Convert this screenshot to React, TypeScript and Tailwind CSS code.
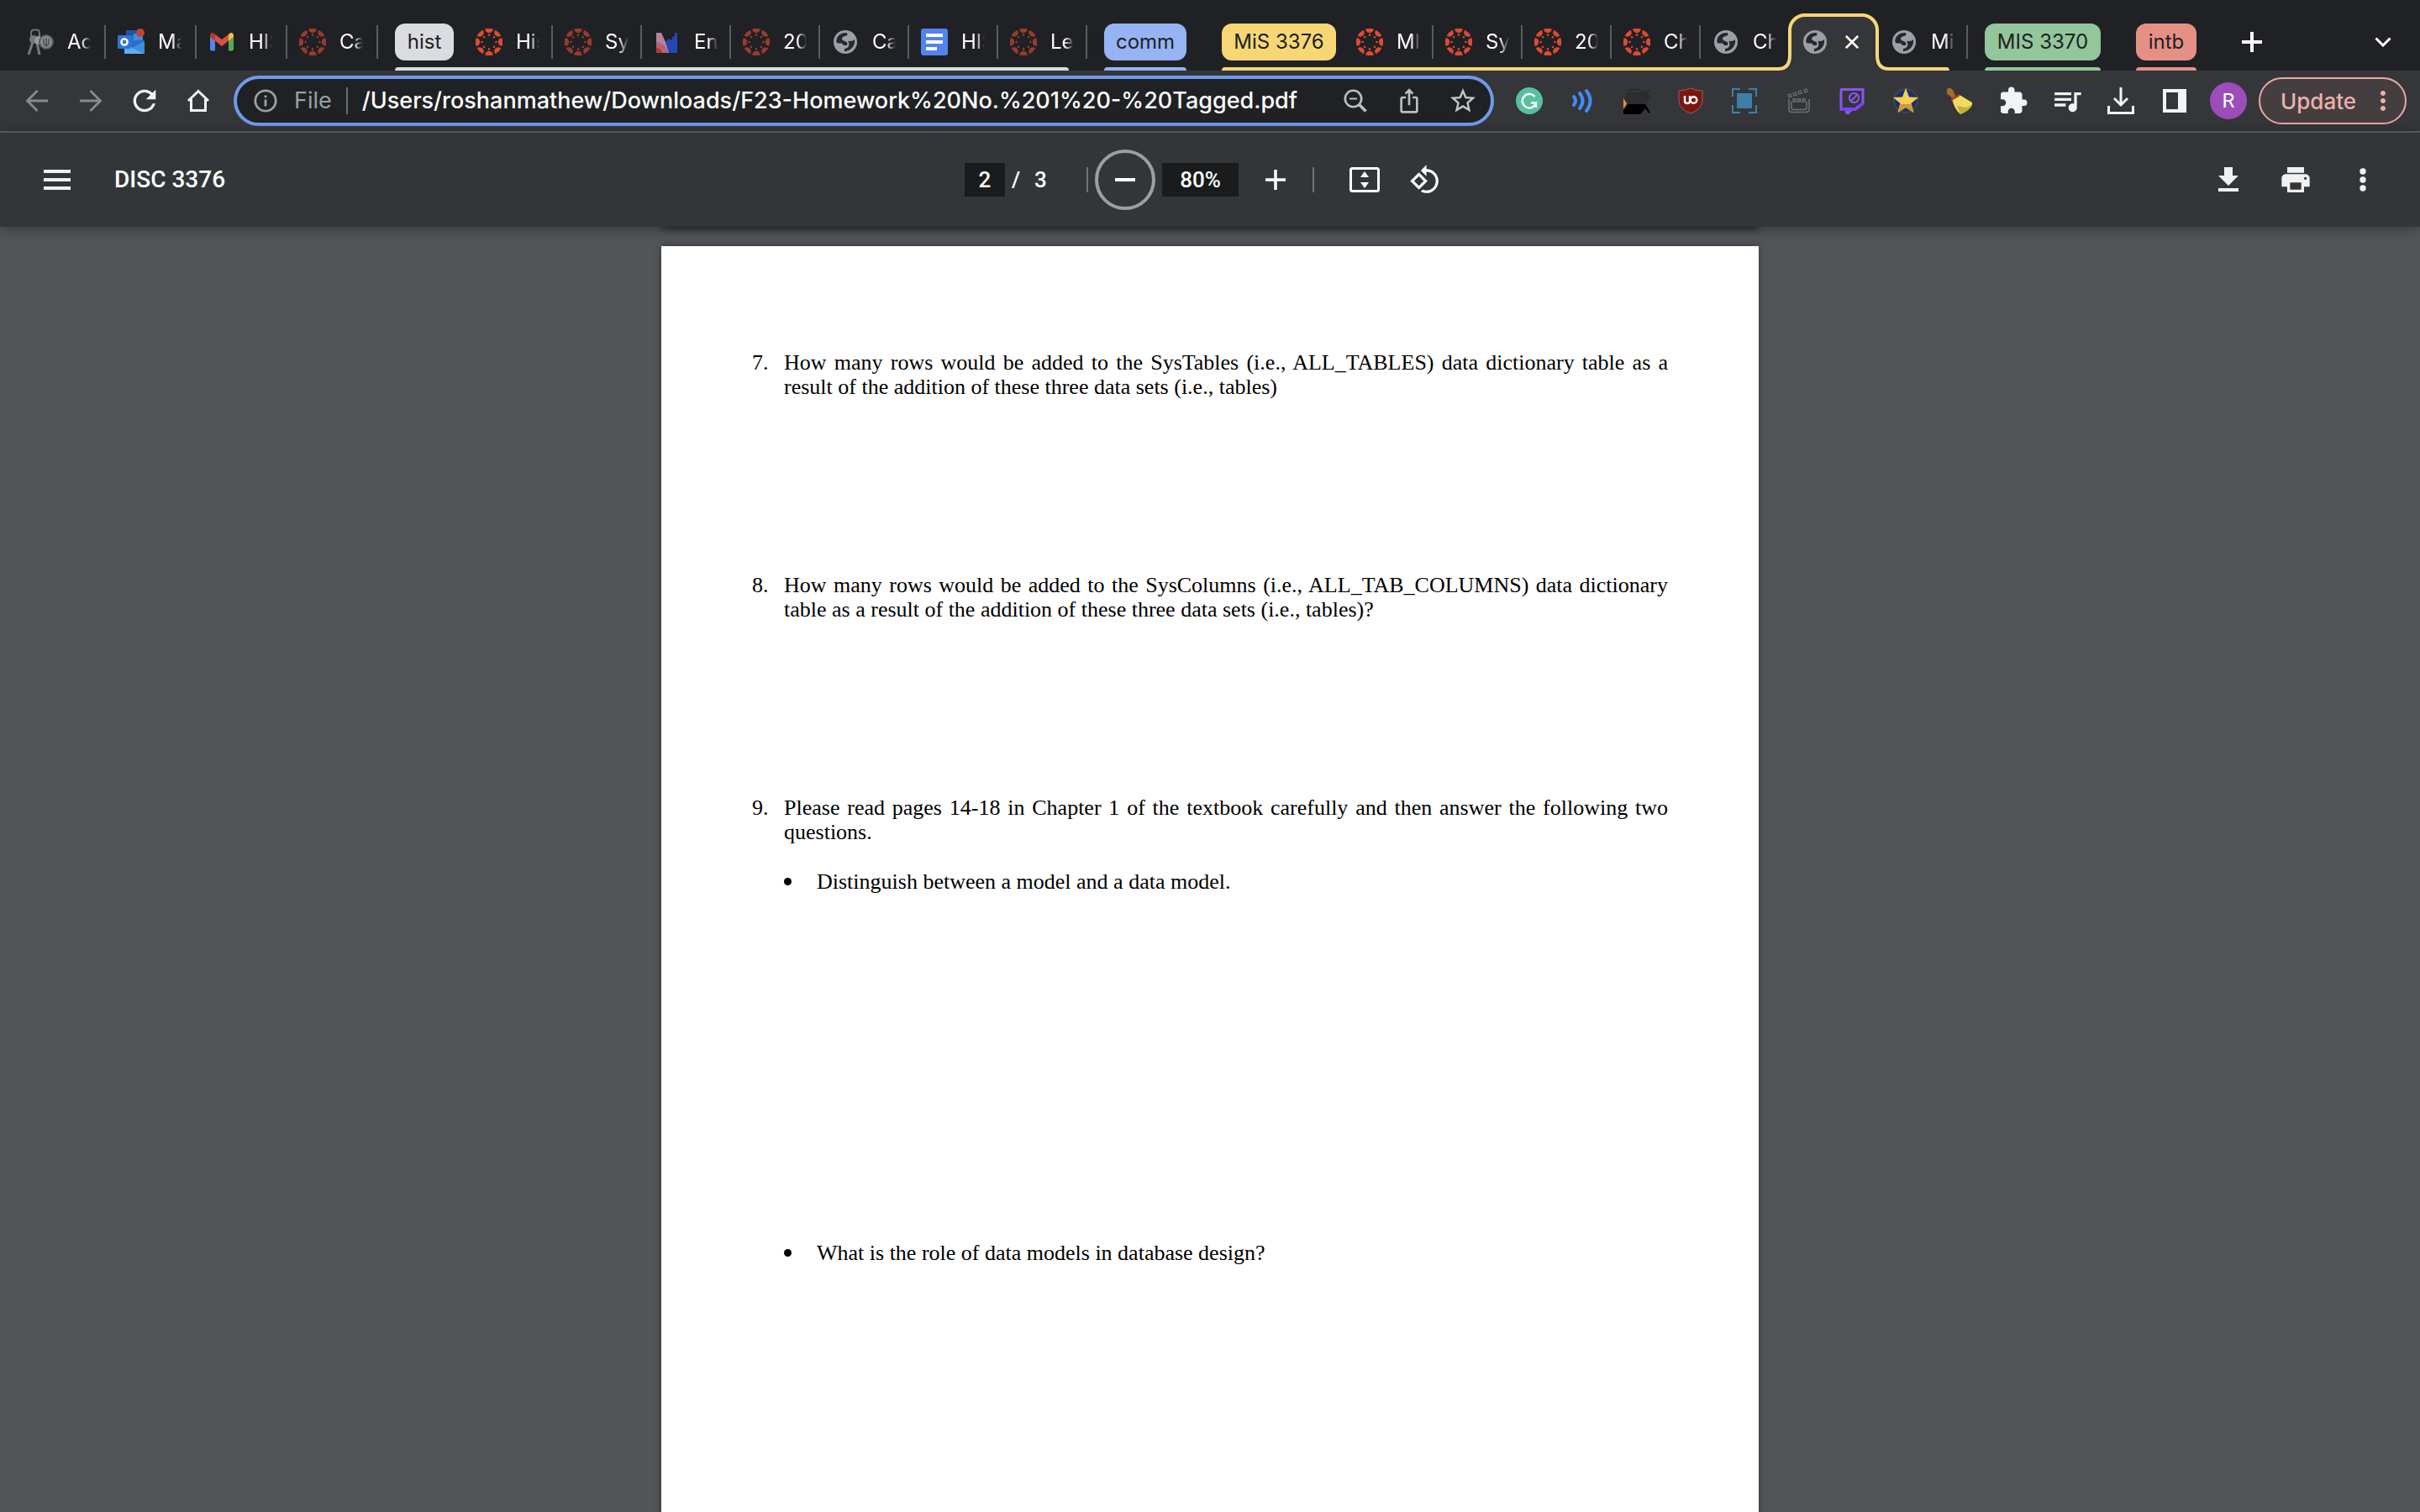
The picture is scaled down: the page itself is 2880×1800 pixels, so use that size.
import type { ReactNode } from "react";
import {
  MdExtension,
  MdIosShare,
  MdMoreVert,
  MdPrint,
  MdQueueMusic,
  MdRefresh,
  MdRotate90DegreesCcw,
  MdStarBorder,
} from "react-icons/md";

const ring = [0, 45, 90, 135, 180, 225, 270, 315];

function CanvasLogo({ dim }: { dim?: boolean }) {
  return (
    <svg viewBox="0 0 32 32" className={dim ? "size-8 shrink-0 text-[#983b2e]" : "size-8 shrink-0 text-[#dd4a35]"} fill="currentColor">
      {ring.map((a) => (
        <g key={a} transform={`rotate(${a} 16 16)`}>
          <path d="M11.2.6A16 16 0 0 1 20.8.6A4.800 4.600 0 0 1 11.2.6Z" />
          <circle cx="16" cy="7.6" r="1.300" />
        </g>
      ))}
    </svg>
  );
}

function Globe() {
  return (
    <svg viewBox="0 0 32 32" className="size-8 shrink-0">
      <circle cx="16" cy="16" r="14" fill="#9aa0a6" />
      <path d="M18 5Q8 4.500 5.500 13Q4.500 17.500 8 17.500H12L14 20H17.500Q19.500 18 17.500 16L13 14Q10.500 11.500 14 9.500L18.500 8Z" fill="#26282b" />
      <path d="M19.500 14.500Q24 16 27 13Q28 21 21 25.500L15 27.500V24Q20 23.500 20.500 19Z" fill="#26282b" />
    </svg>
  );
}

function Keys() {
  return (
    <svg viewBox="0 0 32 32" className="size-8 shrink-0" fill="none">
      <path d="M5 9V5Q5 1.500 9 1.500H12Q15 1.500 15 5V11" stroke="#6f7072" strokeWidth="2" />
      <circle cx="8" cy="13" r="5" fill="#747577" />
      <path d="M7 16L2 31M12 17L15 31" stroke="#77787a" strokeWidth="3" />
      <circle cx="14" cy="14" r="5" fill="#98999b" />
      <circle cx="23" cy="16" r="8" fill="#8c8d8f" stroke="#5a5b5d" strokeWidth="2" />
      <path d="M20 12V17Q20 20 23 20T26 17V12M23 11V22" stroke="#4b4c4e" strokeWidth="1.500" />
    </svg>
  );
}

function Outlook() {
  return (
    <svg viewBox="0 0 32 32" className="size-8 shrink-0">
      <path d="M10 2H28V18H10Z" fill="#1f55a5" />
      <path d="M19 6H30V16H19Z" fill="#3f8fdc" />
      <path d="M8 16L30 13L32 15V30H8Z" fill="#2a6fc4" />
      <path d="M8 30V18L32 30Z" fill="#5ab0ee" />
      <path d="M32 15V30L17 23Z" fill="#3f8fdc" />
      <path d="M12 8H19V16H12Z" fill="#2f6fc2" />
      <rect x="0" y="8" width="16" height="16" rx="1" fill="#2f76d2" />
      <circle cx="8" cy="16" r="3.600" fill="none" stroke="#fff" strokeWidth="2.400" />
      <circle cx="27" cy="5" r="5" fill="#c6413b" />
    </svg>
  );
}

function Gmail() {
  return (
    <svg viewBox="0 0 32 32" className="size-8 shrink-0">
      <path d="M2 8L8 12V26.500H4Q2 26.500 2 24.500Z" fill="#4f86ec" />
      <path d="M30 8L24 12V26.500H28Q30 26.500 30 24.500Z" fill="#58a65c" />
      <path d="M8 7L16 13L24 7V14.500L16 21L8 14.500Z" fill="#d95040" />
      <path d="M2 8.500Q2 5 5 5Q6.500 5 8 7V14.500L2 10Z" fill="#b5362b" />
      <path d="M30 8.500Q30 5 27 5Q25.500 5 24 7V14.500L30 10Z" fill="#f2bf42" />
    </svg>
  );
}

function Encyclopedia() {
  return (
    <svg viewBox="0 0 32 32" className="size-8 shrink-0">
      <path d="M3 5H9L15 18L20 29H3Z" fill="#b5849a" />
      <path d="M3 16Q14 17 17 29H3Z" fill="#b5607c" />
      <path d="M3 23Q9 23 10 29H3Z" fill="#b5382f" />
      <path d="M28 5V29H18L14 16L18 12L21 14L23 9H25V5Z" fill="#2347b5" />
    </svg>
  );
}

function Docs() {
  return (
    <svg viewBox="0 0 32 32" className="size-8 shrink-0">
      <rect width="32" height="32" rx="3" fill="#5383ec" />
      <path d="M6 6H26V10H6ZM6 14H26V18H6ZM6 22H19V26H6Z" fill="#fff" />
    </svg>
  );
}

type TabData = { title: string; icon: ReactNode };

const looseTabs: TabData[] = [
  { title: "Ac", icon: <Keys /> },
  { title: "Ma", icon: <Outlook /> },
  { title: "HIS", icon: <Gmail /> },
  { title: "Ca", icon: <CanvasLogo dim /> },
];
const histTabs: TabData[] = [
  { title: "His", icon: <CanvasLogo /> },
  { title: "Sy", icon: <CanvasLogo dim /> },
  { title: "En", icon: <Encyclopedia /> },
  { title: "20", icon: <CanvasLogo dim /> },
  { title: "Ca", icon: <Globe /> },
  { title: "HIS", icon: <Docs /> },
  { title: "Le", icon: <CanvasLogo dim /> },
];
const misTabs: TabData[] = [
  { title: "MI", icon: <CanvasLogo /> },
  { title: "Sy", icon: <CanvasLogo /> },
  { title: "20", icon: <CanvasLogo /> },
  { title: "Ch", icon: <CanvasLogo /> },
  { title: "Ch", icon: <Globe /> },
];

function Tab({ tab, wide, last }: { tab: TabData; wide?: boolean; last?: boolean }) {
  return (
    <button className={wide ? "flex h-full w-[108px] shrink-0 items-center pl-[14px]" : "flex h-full w-[106px] shrink-0 items-center pl-[14px]"}>
      {tab.icon}
      <span className="ml-4 w-7 text-left whitespace-nowrap [mask-image:linear-gradient(to_right,black_60%,transparent)]">
        {tab.title}
      </span>
      {!last && <span className="ml-auto h-10 w-[2px] bg-[#5b5c5f]" />}
    </button>
  );
}

function Chip({ children, tone }: { children: string; tone: string }) {
  return (
    <button className={`flex h-11 shrink-0 items-center justify-center rounded-xl text-[#202124] ${tone}`}>
      {children}
    </button>
  );
}

function GroupLine({ tone }: { tone: string }) {
  return <span className={`absolute bottom-0 left-0 h-1 rounded-t ${tone}`} />;
}

function TabStrip() {
  return (
    <nav aria-label="Tabs" className="flex h-[84px] shrink-0 items-stretch bg-[#202124] pt-4 pl-[18px] text-[24px] text-white">
      {looseTabs.map((t) => (
        <Tab key={t.title} tab={t} wide />
      ))}
      <div className="relative ml-5 flex items-center">
        <Chip tone="mr-3 w-[70px] bg-[#dbdce0]">hist</Chip>
        {histTabs.map((t) => (
          <Tab key={t.title} tab={t} />
        ))}
        <GroupLine tone="right-[22px] bg-[#dbdce0]" />
      </div>
      <div className="relative ml-5 flex items-center">
        <Chip tone="w-[98px] bg-[#96b3f3]">comm</Chip>
        <GroupLine tone="right-0 bg-[#96b3f3]" />
      </div>
      <div className="relative ml-[42px] flex items-center">
        <GroupLine tone="right-[22px] bg-[#f7d775]" />
        <Chip tone="mr-[10px] w-[136px] bg-[#f7d775]">MiS 3376</Chip>
        {misTabs.map((t, i) => (
          <Tab key={i} tab={t} last={i === misTabs.length - 1} />
        ))}
        <div className="relative flex h-full w-[106px] items-center pl-[14px]">
          <svg viewBox="0 0 132 68" className="absolute bottom-0 -left-[14px] h-[68px] w-[132px]" fill="none">
            <path d="M0 68V66Q14 66 14 50V20A18 18 0 0 1 32 2H100A18 18 0 0 1 118 20V50Q118 66 132 66V68Z" fill="#35363a" />
            <path d="M0 66Q14 66 14 50V20A18 18 0 0 1 32 2H100A18 18 0 0 1 118 20V50Q118 66 132 66" stroke="#f7d775" strokeWidth="4" />
          </svg>
          <span className="relative">
            <Globe />
          </span>
          <button aria-label="Close tab" className="relative ml-3 flex size-8 items-center justify-center">
            <svg viewBox="0 0 18 18" className="size-4" stroke="#fff" strokeWidth="3">
              <path d="M1 1L17 17M17 1L1 17" />
            </svg>
          </button>
        </div>
        <Tab tab={{ title: "Mi", icon: <Globe /> }} />
      </div>
      <div className="relative ml-5 flex items-center">
        <Chip tone="w-[138px] bg-[#93c69b]">MIS 3370</Chip>
        <GroupLine tone="right-0 bg-[#93c69b]" />
      </div>
      <div className="relative ml-[42px] flex items-center">
        <Chip tone="w-[72px] bg-[#e59086]">intb</Chip>
        <GroupLine tone="right-0 bg-[#e59086]" />
      </div>
      <button aria-label="New tab" className="ml-[46px] flex w-10 items-center justify-center">
        <svg viewBox="0 0 24 24" className="size-6" stroke="#fff" strokeWidth="4">
          <path d="M12 0V24M0 12H24" />
        </svg>
      </button>
      <button aria-label="Search tabs" className="mr-6 ml-auto flex w-10 items-center justify-center">
        <svg viewBox="0 0 20 12" className="h-3 w-5" stroke="#fff" strokeWidth="3" fill="none">
          <path d="M1.500 1.500L10 10L18.500 1.500" />
        </svg>
      </button>
    </nav>
  );
}

function IconButton({ label, children }: { label: string; children: ReactNode }) {
  return (
    <button aria-label={label} className="flex h-16 w-16 shrink-0 items-center justify-center text-[#f1f3f4]">
      {children}
    </button>
  );
}

const extensions: { label: string; icon: ReactNode }[] = [
  {
    label: "Grammar checker",
    icon: (
      <svg viewBox="0 0 32 32" className="size-8" fill="none">
        <circle cx="16" cy="16" r="16" fill="#58c09c" />
        <path d="M22.500 11A8.300 8.300 0 1 0 24 18.500H18M24 18V24" stroke="#fff" strokeWidth="2.400" />
      </svg>
    ),
  },
  {
    label: "Read aloud",
    icon: (
      <svg viewBox="0 0 32 32" className="size-8" fill="none" stroke="#3f8df5" strokeWidth="4" strokeLinecap="round">
        <path d="M5 11Q9 16 5 21M12 7Q19 16 12 25M20 4Q29 16 20 28" />
      </svg>
    ),
  },
  {
    label: "Coupon finder",
    icon: (
      <svg viewBox="0 0 32 32" className="size-8">
        <path d="M0 14L5 6H28L32 14L26 20H4Z" fill="#2c2d30" />
        <path d="M0 13L4 19L0 26Z" fill="#ee8c34" />
        <path d="M0 27L6 20H26L32 30L30 31L26 25L20 32H0Z" fill="#000" />
        <path d="M6 4Q14 0 20 4T32 3" stroke="#2a2b2d" strokeWidth="1.500" fill="none" />
      </svg>
    ),
  },
  {
    label: "Ad blocker",
    icon: (
      <svg viewBox="0 0 32 32" className="size-8" fill="none">
        <path d="M16 .8Q22 4 30 4V17Q29 26 16 31.200Q3 26 2 17V4Q10 4 16 .8Z" fill="#7c150f" stroke="#8c6664" />
        <path d="M9 10V16.500Q9 19 12 19T15 16.500V10" stroke="#fff" strokeWidth="2.400" />
        <circle cx="19.500" cy="15" r="3.800" stroke="#fff" strokeWidth="2.400" />
      </svg>
    ),
  },
  {
    label: "Screen capture",
    icon: (
      <svg viewBox="0 0 32 32" className="size-8" fill="none" stroke="#3d7fa8" strokeWidth="2">
        <path d="M2 11V2H11M21 2H30V11M30 21V30H21M11 30H2V21" />
        <path d="M7 7H25V25H7Z" fill="#3d7fa8" stroke="none" />
      </svg>
    ),
  },
  {
    label: "Video downloader",
    icon: (
      <svg viewBox="0 0 32 32" className="size-8" fill="none" stroke="#6f7073" strokeWidth="1.500">
        <path d="M5 14V26Q5 29.500 8 29.500H25Q29 29.500 29 26V14M8 17V24Q8 26.500 10 26.500H23Q26 26.500 26 24V17" />
        <path d="M10 14H13V17H10ZM15.500 14H18.500V17H15.500ZM21 14H24V17H21ZM4 9L7 8L8 11L5 12ZM10 7L13 6L14 9L11 10ZM16 5L19 4L20 7L17 8ZM23 3L26 2L27 5L24 6Z" strokeWidth="1.300" />
      </svg>
    ),
  },
  {
    label: "Stream helper",
    icon: (
      <svg viewBox="0 0 32 32" className="size-8" fill="none" stroke="#8a56f0">
        <path d="M3.500 2.500H29V19L20 26H16L11 31L9.500 30V26H3V4Z" strokeWidth="3" fill="#35363a" />
        <path d="M3 26H20L29 19" strokeWidth="4" stroke="#7b42ee" />
        <circle cx="18.500" cy="12.500" r="5.600" strokeWidth="2" />
        <path d="M15 16L22 9" strokeWidth="2" />
      </svg>
    ),
  },
  {
    label: "Favourites",
    icon: (
      <svg viewBox="0 0 32 32" className="size-8">
        <circle cx="16" cy="16" r="14" fill="#1f2f6b" stroke="#44464c" strokeWidth="2" />
        <path d="M16 1L20 11.500L31 12L22.500 19L25.500 30L16 24L6.500 30L9.500 19L1 12L12 11.500Z" fill="#f3ce57" />
        <path d="M9 20L23 20L25.500 30L16 24L6.500 30Z" fill="#cb9b35" />
      </svg>
    ),
  },
  {
    label: "Cleaner",
    icon: (
      <svg viewBox="0 0 32 32" className="size-8">
        <path d="M1 2Q4-1 8 3L12 12L8 14Q4 9 1 8Z" fill="#a86a24" />
        <path d="M7 14L16 9L31 18Q32 25 17 32Q10 26 7 14Z" fill="#f0dc5c" />
        <path d="M13 22L17 32Q28 28 31 21L24 24Z" fill="#c2b23a" />
        <path d="M6 15L16 9" stroke="#b3372d" strokeWidth="2.500" />
      </svg>
    ),
  },
  { label: "Extensions", icon: <MdExtension className="size-9" /> },
  { label: "Media control", icon: <MdQueueMusic className="size-10" /> },
  {
    label: "Downloads",
    icon: (
      <svg viewBox="0 0 32 32" className="size-8" fill="none" stroke="currentColor" strokeWidth="3">
        <path d="M16 0V21M8 13L16 21L24 13M1.500 22V30.500H30.500V22" />
      </svg>
    ),
  },
  {
    label: "Side panel",
    icon: (
      <svg viewBox="0 0 32 32" className="size-8" fill="currentColor">
        <path fillRule="evenodd" d="M2 2H30V30H2ZM6 6V26H20V6Z" />
      </svg>
    ),
  },
];

function Toolbar() {
  return (
    <header className="flex h-[74px] shrink-0 items-center border-b-2 border-[#5f6063] bg-[#35363a] pr-4 pl-3">
      <IconButton label="Back">
        <svg viewBox="0 0 28 28" className="size-7" fill="none" stroke="#88898b" strokeWidth="2.800">
          <path d="M27 14H2.500M14.500 2L2.500 14L14.500 26" />
        </svg>
      </IconButton>
      <IconButton label="Forward">
        <svg viewBox="0 0 28 28" className="size-7" fill="none" stroke="#88898b" strokeWidth="2.800">
          <path d="M1 14H25.500M13.500 2L25.500 14L13.500 26" />
        </svg>
      </IconButton>
      <IconButton label="Reload">
        <MdRefresh className="size-10" />
      </IconButton>
      <IconButton label="Home">
        <svg viewBox="0 0 28 28" className="size-7" fill="none" stroke="currentColor" strokeWidth="3">
          <path d="M2 14L14 2.500L26 14M5.500 12V25.500H22.500V12" />
        </svg>
      </IconButton>
      <div className="ml-[10px] flex h-[60px] flex-1 items-center rounded-full border-4 border-[#7099ec] bg-[#202124] pr-px text-[27px]">
        <svg viewBox="0 0 28 28" className="ml-[20px] size-7" fill="none" stroke="#9aa0a6" strokeWidth="2.800">
          <circle cx="14" cy="14" r="12.200" />
          <path d="M14 12.500V20.500M14 7.500V10.300" />
        </svg>
        <label htmlFor="address" className="ml-5 text-[#9aa0a6]">
          File
        </label>
        <span className="mx-[17px] h-8 w-[2px] bg-[#6b6c70]" />
        <input
          id="address"
          className="min-w-0 flex-1 bg-transparent font-medium text-white outline-none"
          defaultValue="/Users/roshanmathew/Downloads/F23-Homework%20No.%201%20-%20Tagged.pdf"
        />
        <IconButton label="Zoom">
          <svg viewBox="0 0 28 28" className="size-7" fill="none" stroke="#bdbec0" strokeWidth="2.600">
            <circle cx="11.500" cy="11.500" r="9.700" />
            <path d="M7 11.500H16" strokeWidth="2" />
            <path d="M18.500 18.500L26.500 26.500" strokeWidth="3.500" />
          </svg>
        </IconButton>
        <IconButton label="Share">
          <MdIosShare className="size-8 text-[#bdbec0]" />
        </IconButton>
        <IconButton label="Bookmark">
          <MdStarBorder className="size-9 text-[#c5c6c8]" />
        </IconButton>
      </div>
      <div className="ml-[10px] flex items-center">
        {extensions.map((e) => (
          <IconButton key={e.label} label={e.label}>
            {e.icon}
          </IconButton>
        ))}
      </div>
      <button aria-label="Profile" className="ml-[10px] flex size-11 shrink-0 items-center justify-center rounded-full bg-[#9c4db8] font-[Roboto] text-[24px] text-white">
        R
      </button>
      <button className="ml-[14px] flex h-14 w-[176px] shrink-0 items-center justify-between rounded-full border-2 border-[#eba9a3] bg-[#453e41] pr-2 pl-6 text-[26px] font-medium text-[#eeb0aa]">
        Update
        <MdMoreVert className="size-9" />
      </button>
    </header>
  );
}

function PdfButton({ label, children, focused }: { label: string; children: ReactNode; focused?: boolean }) {
  return (
    <button
      aria-label={label}
      className={
        focused
          ? "flex size-[72px] shrink-0 items-center justify-center rounded-full border-4 border-[#9aa0a6]"
          : "flex size-[72px] shrink-0 items-center justify-center rounded-full"
      }
    >
      {children}
    </button>
  );
}

function PdfToolbar() {
  return (
    <div className="relative z-10 flex h-28 shrink-0 items-center bg-[#323639] font-[Roboto] text-[#f1f1f1] shadow-[0_2px_16px_rgba(0,0,0,0.35)]">
      <div className="flex flex-1 items-center pl-8">
        <PdfButton label="Menu">
          <svg viewBox="0 0 32 24" className="h-6 w-8" fill="currentColor">
            <path d="M0 0H32V4H0ZM0 10H32V14H0ZM0 20H32V24H0Z" />
          </svg>
        </PdfButton>
        <h1 className="ml-8 text-[28px] font-medium text-white">DISC 3376</h1>
      </div>
      <div className="flex items-center text-[26px] font-medium text-white">
        <input aria-label="Page number" defaultValue="2" className="h-10 w-12 bg-[#191b1c] text-center outline-none" />
        <span className="ml-2 w-[27px]">/</span>
        <span className="w-[62px]">3</span>
        <span className="mr-2 h-[30px] w-[2px] bg-[#707375]" />
        <PdfButton label="Zoom out" focused>
          <svg viewBox="0 0 24 24" className="size-6" fill="currentColor">
            <path d="M0 10H24V14H0Z" />
          </svg>
        </PdfButton>
        <input aria-label="Zoom level" defaultValue="80%" className="mx-2 h-10 w-[91px] bg-[#191b1c] text-center outline-none" />
        <PdfButton label="Zoom in">
          <svg viewBox="0 0 24 24" className="size-6" stroke="currentColor" strokeWidth="3.500">
            <path d="M12 0V24M0 12H24" />
          </svg>
        </PdfButton>
        <span className="mr-6 ml-2 h-[30px] w-[2px] bg-[#707375]" />
        <PdfButton label="Fit to page">
          <svg viewBox="0 0 36 30" className="h-[30px] w-9" fill="none">
            <rect x="1.500" y="1.500" width="33" height="27" rx="2" stroke="currentColor" strokeWidth="3" />
            <path d="M18 5L23 12H13ZM18 25L23 18H13Z" fill="currentColor" />
          </svg>
        </PdfButton>
        <PdfButton label="Rotate">
          <MdRotate90DegreesCcw className="size-[38px]" />
        </PdfButton>
      </div>
      <div className="flex flex-1 items-center justify-end gap-2 pr-8">
        <PdfButton label="Download">
          <svg viewBox="0 0 24 30" className="h-[30px] w-6" fill="currentColor">
            <path d="M7 0H17V10H24L12 22L0 10H7ZM0 25H24V29H0Z" />
          </svg>
        </PdfButton>
        <PdfButton label="Print">
          <MdPrint className="size-10" />
        </PdfButton>
        <PdfButton label="More">
          <svg viewBox="0 0 8 28" className="h-7 w-2" fill="currentColor">
            <circle cx="4" cy="4" r="3.700" />
            <circle cx="4" cy="14" r="3.700" />
            <circle cx="4" cy="24" r="3.700" />
          </svg>
        </PdfButton>
      </div>
    </div>
  );
}

export default function App() {
  return (
    <div className="flex h-screen flex-col overflow-hidden bg-[#525659] font-[Inter,sans-serif]">
      <TabStrip />
      <Toolbar />
      <PdfToolbar />
      <main className="flex min-h-0 flex-1 flex-col items-center overflow-hidden">
        <div className="-mt-2 h-2 w-[1306px] shrink-0 bg-white shadow-[0_2px_10px_rgba(30,25,30,0.9)]" />
        <article className="mt-[23px] min-h-[1690px] w-[1306px] shrink-0 bg-white pt-[124px] pr-[108px] pl-[108px] font-['Liberation_Serif',serif] text-[26px] leading-[29px] text-black shadow-[0_0_8px_rgba(40,36,44,0.7)]">
          <ol start={7} className="flex flex-col gap-[207px] text-justify">
            <li className="flex">
              <span className="w-[38px] shrink-0">7.</span>
              <p className="flex-1">
                How many rows would be added to the SysTables (i.e., ALL_TABLES) data dictionary table as a result of
                the addition of these three data sets (i.e., tables)
              </p>
            </li>
            <li className="flex">
              <span className="w-[38px] shrink-0">8.</span>
              <p className="flex-1">
                How many rows would be added to the SysColumns (i.e., ALL_TAB_COLUMNS) data dictionary table as a
                result of the addition of these three data sets (i.e., tables)?
              </p>
            </li>
            <li className="flex">
              <span className="w-[38px] shrink-0">9.</span>
              <div className="flex-1">
                <p>
                  Please read pages 14-18 in Chapter 1 of the textbook carefully and then answer the following two
                  questions.
                </p>
                <ul className="mt-[30px] flex flex-col gap-[413px]">
                  <li className="flex items-center">
                    <span className="mr-[30px] size-[9px] rounded-full bg-black" />
                    Distinguish between a model and a data model.
                  </li>
                  <li className="flex items-center">
                    <span className="mr-[30px] size-[9px] rounded-full bg-black" />
                    What is the role of data models in database design?
                  </li>
                </ul>
              </div>
            </li>
          </ol>
        </article>
      </main>
    </div>
  );
}
